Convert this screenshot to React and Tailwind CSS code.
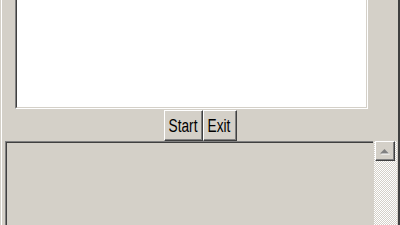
export default function App() {
  return (
    <div className="w-[400px] h-[225px] overflow-hidden bg-[#d4d0c8] pl-px font-['Liberation_Sans',sans-serif]">
      <div className="h-full flex flex-col border-l border-l-white border-r-2 border-r-[#404040]">
        {/* top white list */}
        <div className="ml-[13px] w-[353px] h-[109px] flex flex-col border-l border-l-[#808080] border-b border-b-white border-r border-r-white">
          <div className="flex-1 border-l border-l-[#404040] border-b border-b-[#d4d0c8] border-r border-r-[#d4d0c8] bg-white"></div>
        </div>

        {/* buttons */}
        <div className="h-[32px] pt-px flex justify-center">
          <button className="w-[39px] h-[31px] flex items-center justify-center bg-[#d4d0c8] border border-t-white border-l-white border-r-[#404040] border-b-[#404040] shadow-[inset_-1px_-1px_0_#808080] text-black text-[18px] leading-none">
            <span className="inline-block scale-x-[0.76]">Start</span>
          </button>
          <button className="w-[34px] h-[31px] flex items-center justify-center bg-[#d4d0c8] border border-t-white border-l-white border-r-[#404040] border-b-[#404040] shadow-[inset_-1px_-1px_0_#808080] text-black text-[18px] leading-none">
            <span className="inline-block scale-x-[0.76]">Exit</span>
          </button>
        </div>

        {/* bottom panel with scrollbar */}
        <div className="flex-1 flex">
          <div className="ml-[3px] w-[368px] flex flex-col border-l border-t border-[#808080]">
            <div className="flex-1 border-l border-t border-[#404040] bg-[#d4d0c8]"></div>
          </div>
          <div className="ml-px w-[23px] flex flex-col bg-[image:repeating-conic-gradient(#ffffff_0_25%,#d4d0c8_0_50%)] bg-[length:2px_2px]">
            <div className="ml-px w-[20px] h-[20px] flex items-center justify-center bg-[#d4d0c8] border border-t-white border-l-white border-r-[#404040] border-b-[#404040] shadow-[inset_-1px_-1px_0_#808080]">
              <svg width="11" height="7" viewBox="0 0 11 7">
                <path d="M1 6.5 L5.5 2 L10 6.5 Z" fill="#ffffff" />
                <path d="M0 5.5 L4.5 1 L9 5.5 Z" fill="#808080" />
              </svg>
            </div>
          </div>
        </div>
      </div>
    </div>
  );
}
